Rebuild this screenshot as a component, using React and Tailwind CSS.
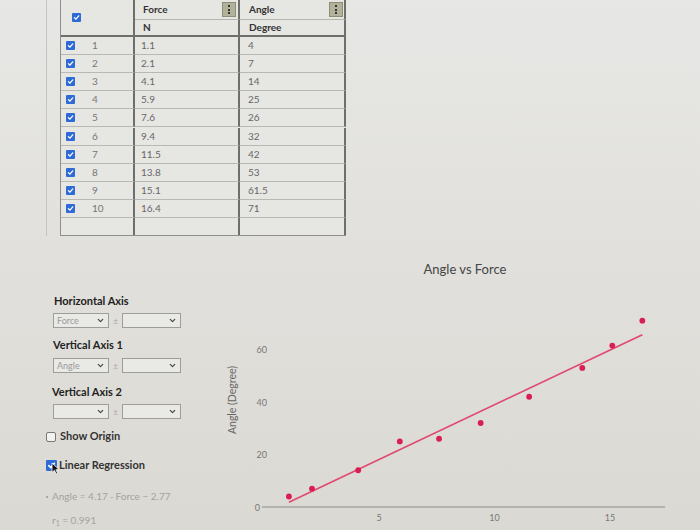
import React from "react";
import { ChevronDown } from "lucide-react";

const rows = [
  [1, "1.1", "4"],
  [2, "2.1", "7"],
  [3, "4.1", "14"],
  [4, "5.9", "25"],
  [5, "7.6", "26"],
  [6, "9.4", "32"],
  [7, "11.5", "42"],
  [8, "13.8", "53"],
  [9, "15.1", "61.5"],
  [10, "16.4", "71"],
];

function BlueCheck({ size = 9 }) {
  return (
    <span
      className="inline-flex items-center justify-center bg-[#2f6bd6] rounded-[1px] shrink-0"
      style={{ width: size, height: size }}
    >
      <svg width={size - 2} height={size - 2} viewBox="0 0 10 10">
        <path d="M2 5.2 L4.2 7.4 L8.2 2.6" fill="none" stroke="white" strokeWidth="1.8" strokeLinecap="round" strokeLinejoin="round" />
      </svg>
    </span>
  );
}

function MenuBtn() {
  return (
    <span className="w-[14px] h-[15px] bg-[#b2b29a] border border-[#8d8d78] flex flex-col items-center justify-center gap-[1.5px]">
      <span className="w-[2px] h-[2px] bg-[#333]" />
      <span className="w-[2px] h-[2px] bg-[#333]" />
      <span className="w-[2px] h-[2px] bg-[#333]" />
    </span>
  );
}

function Select({ w, text }) {
  return (
    <div
      className="h-[15px] border border-[#9d9d9a] bg-[#e9e9e6] flex items-center justify-between pl-[3px] pr-[3px]"
      style={{ width: w }}
    >
      <span className="text-[9px] leading-none text-[#9a9a9a]">{text}</span>
      <ChevronDown size={9} strokeWidth={3.2} color="#444" />
    </div>
  );
}

function AxisRow({ a, b }) {
  return (
    <div className="flex items-center ml-[7px]">
      <Select w={56} text={a} />
      <span className="text-[9px] leading-none text-[#aaa] mx-[4px]">±</span>
      <Select w={59} text={b} />
    </div>
  );
}

const F = [1.1, 2.1, 4.1, 5.9, 7.6, 9.4, 11.5, 13.8, 15.1, 16.4];
const A = [4, 7, 14, 25, 26, 32, 42, 53, 61.5, 71];
const sx = (f) => 43.5 + 23.1 * f;
const sy = (a) => 267 - 2.625 * a;

function Chart() {
  return (
    <svg width="480" height="290" viewBox="0 0 480 290" className="block" style={{ fontFamily: "Lato, 'Open Sans', sans-serif" }}>
      <text x="245" y="34" textAnchor="middle" fontSize="13" fill="#454545">Angle vs Force</text>
      <text transform="translate(16 160) rotate(-90)" textAnchor="middle" fontSize="10.5" fill="#666">Angle (Degree)</text>
      {[60, 40, 20].map((v) => (
        <text key={v} x="47" y={sy(v) + 3.5} textAnchor="end" fontSize="9" fill="#777">{v}</text>
      ))}
      <text x="40" y={270.5} textAnchor="end" fontSize="9" fill="#777">0</text>
      <line x1="42" y1="267" x2="445" y2="267" stroke="#8a8a8a" strokeWidth="1" />
      {[5, 10, 15].map((v) => (
        <text key={v} x={sx(v)} y="281" textAnchor="middle" fontSize="9" fill="#777">{v}</text>
      ))}
      <line
        x1={sx(1.1)}
        y1={sy(4.17 * 1.1 - 2.77)}
        x2={sx(16.4)}
        y2={sy(4.17 * 16.4 - 2.77)}
        stroke="#e0486f"
        strokeWidth="1.6"
      />
      {F.map((f, i) => (
        <circle key={i} cx={sx(f)} cy={sy(A[i])} r="2.9" fill="#d81e52" />
      ))}
    </svg>
  );
}

export default function App() {
  return (
    <div
      className="w-[700px] h-[530px] overflow-hidden relative bg-linear-to-b from-[#e7e7e5] to-[#dbd9d3]"
      style={{ fontFamily: "Lato, 'Open Sans', sans-serif" }}
    >
      <div className="flex">
        <div className="w-[47px] h-[236px] border-r border-[#c4c4c0]" />
        <div className="ml-[13px] grid grid-cols-[74px_105px_106px] border-l border-b border-[#8f8f8c] bg-[#e6e6e3]">
          <div className="row-span-2 border-r-2 border-b-2 border-[#6e6e6b] flex items-start pt-[13px] pl-[11px]">
            <BlueCheck />
          </div>
          <div className="h-[20px] border-r-2 border-b border-[#b5b5b2] border-r-[#6e6e6b] flex items-center justify-between pl-[8px] pr-[2px]">
            <span className="text-[10px] font-bold text-[#333]">Force</span>
            <MenuBtn />
          </div>
          <div className="h-[20px] border-r-2 border-b border-[#b5b5b2] border-r-[#6e6e6b] flex items-center justify-between pl-[9px] pr-[1px]">
            <span className="text-[10px] font-bold text-[#333]">Angle</span>
            <MenuBtn />
          </div>
          <div className="h-[17px] border-r-2 border-b-2 border-[#6e6e6b] flex items-center pl-[8px]">
            <span className="text-[10px] font-bold text-[#333]">N</span>
          </div>
          <div className="h-[17px] border-r-2 border-b-2 border-[#6e6e6b] flex items-center pl-[9px]">
            <span className="text-[10px] font-bold text-[#333]">Degree</span>
          </div>
          {rows.map(([n, f, a]) => (
            <React.Fragment key={n}>
              <div className="h-[18px] border-r-2 border-b border-[#b8b8b5] border-r-[#6e6e6b] flex items-center pl-[5px]">
                <BlueCheck />
                <span className="text-[10px] text-[#777] ml-[17px]">{n}</span>
              </div>
              <div className="h-[18px] border-r-2 border-b border-[#b8b8b5] border-r-[#6e6e6b] flex items-center pl-[6px]">
                <span className="text-[10px] text-[#666]">{f}</span>
              </div>
              <div className="h-[18px] border-r-2 border-b border-[#b8b8b5] border-r-[#6e6e6b] flex items-center pl-[8px]">
                <span className="text-[10px] text-[#666]">{a}</span>
              </div>
            </React.Fragment>
          ))}
          <div className="h-[17px] border-r-2 border-[#6e6e6b]" />
          <div className="h-[17px] border-r-2 border-[#6e6e6b]" />
          <div className="h-[17px] border-r-2 border-[#6e6e6b]" />
        </div>
      </div>

      <div className="flex mt-[4px]">
        <div className="w-[220px] pl-[46px] pt-[54px] flex flex-col text-[#222]">
          <div className="ml-[8px] text-[11px] font-bold leading-[13px]">Horizontal Axis</div>
          <div className="mt-[6px]"><AxisRow a="Force" b="" /></div>
          <div className="mt-[10px] ml-[7px] text-[11px] font-bold leading-[13px]">Vertical Axis 1</div>
          <div className="mt-[7px]"><AxisRow a="Angle" b="" /></div>
          <div className="mt-[12px] ml-[6px] text-[11px] font-bold leading-[13px]">Vertical Axis 2</div>
          <div className="mt-[6px]"><AxisRow a="" b="" /></div>
          <div className="mt-[11px] flex items-center h-[13px]">
            <span className="w-[10px] h-[10px] border border-[#777] bg-[#f2f2f0] rounded-[2px]" />
            <span className="ml-[4px] text-[11px] font-bold text-[#333]">Show Origin</span>
          </div>
          <div className="mt-[16px] flex items-center h-[13px] relative">
            <BlueCheck size={11} />
            <span className="ml-[2px] text-[11px] font-bold text-[#333]">Linear Regression</span>
            <svg className="absolute left-[5px] top-[3px]" width="9" height="13" viewBox="0 0 9 13">
              <path d="M1 1 L1 10.5 L3.4 8.3 L5.2 12 L6.6 11.3 L4.9 7.7 L8 7.5 Z" fill="#111" stroke="white" strokeWidth="0.8" />
            </svg>
          </div>
          <div className="mt-[18px] flex items-center h-[13px] text-[10px] text-[#a3a3a0]">
            <span className="w-[2px] h-[2px] bg-[#999] rounded-full mr-[4px]" />
            <span>Angle = 4.17 · Force − 2.77</span>
          </div>
          <div className="mt-[11px] ml-[6px] flex items-center h-[13px] text-[10px] text-[#a3a3a0]">
            <span>r<sub className="text-[7px]">1</sub> = 0.991</span>
          </div>
        </div>
        <Chart />
      </div>
    </div>
  );
}
